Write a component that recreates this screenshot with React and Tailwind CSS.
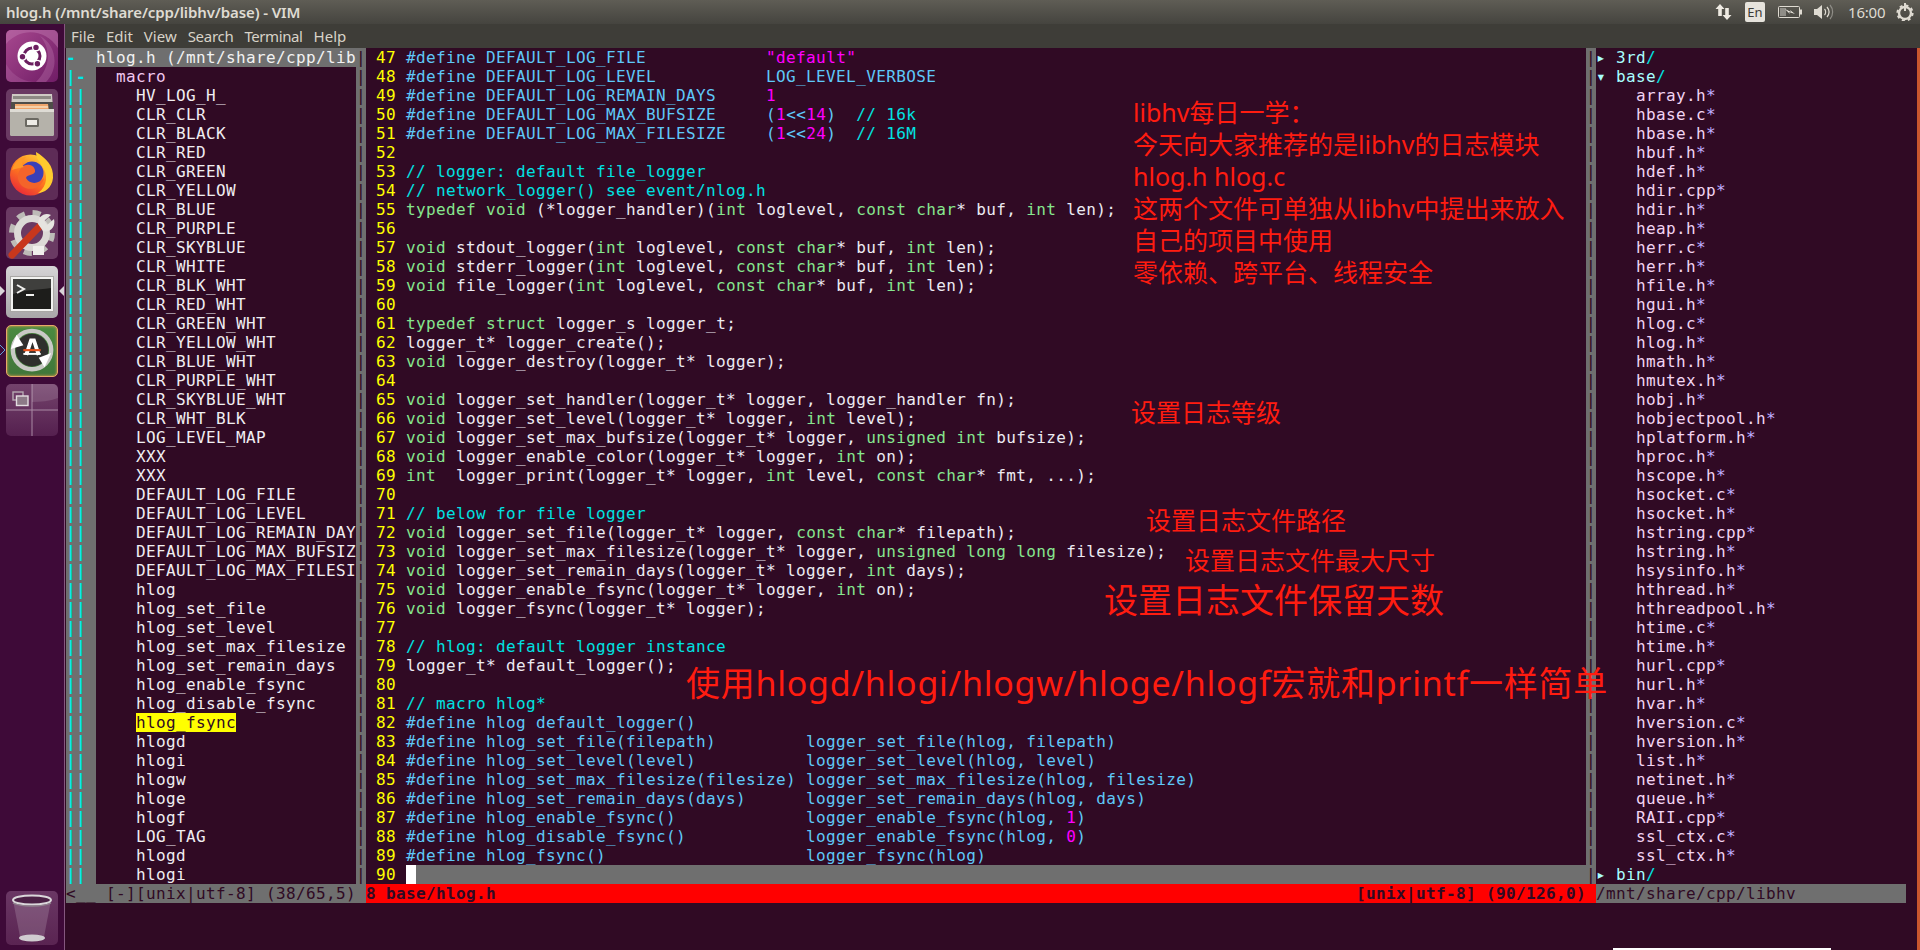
import React from "react";

const CODE = [
  '#define DEFAULT_LOG_FILE            "default"',
  "#define DEFAULT_LOG_LEVEL           LOG_LEVEL_VERBOSE",
  "#define DEFAULT_LOG_REMAIN_DAYS     1",
  "#define DEFAULT_LOG_MAX_BUFSIZE     (1<<14)  // 16k",
  "#define DEFAULT_LOG_MAX_FILESIZE    (1<<24)  // 16M",
  "",
  "// logger: default file_logger",
  "// network_logger() see event/nlog.h",
  "typedef void (*logger_handler)(int loglevel, const char* buf, int len);",
  "",
  "void stdout_logger(int loglevel, const char* buf, int len);",
  "void stderr_logger(int loglevel, const char* buf, int len);",
  "void file_logger(int loglevel, const char* buf, int len);",
  "",
  "typedef struct logger_s logger_t;",
  "logger_t* logger_create();",
  "void logger_destroy(logger_t* logger);",
  "",
  "void logger_set_handler(logger_t* logger, logger_handler fn);",
  "void logger_set_level(logger_t* logger, int level);",
  "void logger_set_max_bufsize(logger_t* logger, unsigned int bufsize);",
  "void logger_enable_color(logger_t* logger, int on);",
  "int  logger_print(logger_t* logger, int level, const char* fmt, ...);",
  "",
  "// below for file logger",
  "void logger_set_file(logger_t* logger, const char* filepath);",
  "void logger_set_max_filesize(logger_t* logger, unsigned long long filesize);",
  "void logger_set_remain_days(logger_t* logger, int days);",
  "void logger_enable_fsync(logger_t* logger, int on);",
  "void logger_fsync(logger_t* logger);",
  "",
  "// hlog: default logger instance",
  "logger_t* default_logger();",
  "",
  "// macro hlog*",
  "#define hlog default_logger()",
  "#define hlog_set_file(filepath)         logger_set_file(hlog, filepath)",
  "#define hlog_set_level(level)           logger_set_level(hlog, level)",
  "#define hlog_set_max_filesize(filesize) logger_set_max_filesize(hlog, filesize)",
  "#define hlog_set_remain_days(days)      logger_set_remain_days(hlog, days)",
  "#define hlog_enable_fsync()             logger_enable_fsync(hlog, 1)",
  "#define hlog_disable_fsync()            logger_enable_fsync(hlog, 0)",
  "#define hlog_fsync()                    logger_fsync(hlog)",
];

const TAGS = ["HV_LOG_H_","CLR_CLR","CLR_BLACK","CLR_RED","CLR_GREEN","CLR_YELLOW","CLR_BLUE","CLR_PURPLE","CLR_SKYBLUE","CLR_WHITE","CLR_BLK_WHT","CLR_RED_WHT","CLR_GREEN_WHT","CLR_YELLOW_WHT","CLR_BLUE_WHT","CLR_PURPLE_WHT","CLR_SKYBLUE_WHT","CLR_WHT_BLK","LOG_LEVEL_MAP","XXX","XXX","DEFAULT_LOG_FILE","DEFAULT_LOG_LEVEL","DEFAULT_LOG_REMAIN_DAY","DEFAULT_LOG_MAX_BUFSIZ","DEFAULT_LOG_MAX_FILESI","hlog","hlog_set_file","hlog_set_level","hlog_set_max_filesize","hlog_set_remain_days","hlog_enable_fsync","hlog_disable_fsync","hlog_fsync","hlogd","hlogi","hlogw","hloge","hlogf","LOG_TAG","hlogd","hlogi"];

const FILES = ["array.h","hbase.c","hbase.h","hbuf.h","hdef.h","hdir.cpp","hdir.h","heap.h","herr.c","herr.h","hfile.h","hgui.h","hlog.c","hlog.h","hmath.h","hmutex.h","hobj.h","hobjectpool.h","hplatform.h","hproc.h","hscope.h","hsocket.c","hsocket.h","hstring.cpp","hstring.h","hsysinfo.h","hthread.h","hthreadpool.h","htime.c","htime.h","hurl.cpp","hurl.h","hvar.h","hversion.c","hversion.h","list.h","netinet.h","queue.h","RAII.cpp","ssl_ctx.c","ssl_ctx.h"];

const RE = /(\/\/.*$|"[^"]*"|\b(?:typedef|void|struct|int|const|char|unsigned|long)\b|\b\d+\b)/;

function Code({ line }) {
  const base = line.startsWith("#define") ? "text-[#5fc8f8]" : "text-[#ecebf2]";
  return line.split(RE).map((t, i) => {
    let c = base;
    if (i % 2) {
      if (t.startsWith("//")) c = "text-[#00e2e2]";
      else if (t.startsWith('"') || /^\d/.test(t)) c = "text-[#ff00ff]";
      else c = "text-[#86e68e]";
    }
    return <span key={i} className={c}>{t}</span>;
  });
}

const Row = ({ className = "", children }) => (
  <div className={"h-[19px] leading-[19px] whitespace-pre flex " + className}>{children}</div>
);

const Sep = () => (
  <div className="w-[10px] shrink-0 bg-[#6f6f6f] flex flex-col">
    {Array.from({ length: 44 }, (_, i) => (
      <div key={i} className="h-[19px] leading-[19px] text-[#300a24]">|</div>
    ))}
  </div>
);

const Tile = ({ children, className = "" }) => (
  <div className={"w-[52px] h-[52px] rounded-[5px] overflow-hidden relative shrink-0 " + className}>{children}</div>
);

function Ubuntu() {
  const dots = [[30, 17.4], [16.5, 26.8], [31.4, 33.8]];
  return (
    <Tile className="bg-gradient-to-br from-[#a8488f] to-[#701c66]">
      <svg viewBox="0 0 52 52" className="w-full h-full">
        <path d="M0 14C16 -4 40 0 52 18V0H0Z" fill="#c07ab2" opacity=".45" />
        <path d="M40 52C54 38 50 14 34 6C46 20 44 38 30 52Z" fill="#c07ab2" opacity=".35" />
        <path d="M0 34C8 48 20 52 30 52H0Z" fill="#c07ab2" opacity=".25" />
        <circle cx="26" cy="26" r="14.5" fill="#fff" />
        <circle cx="26" cy="26" r="8" fill="none" stroke="#6b1f60" strokeWidth="3" />
        {dots.map(([x, y], i) => (
          <g key={i}>
            <circle cx={x} cy={y} r="4" fill="#fff" />
            <circle cx={x} cy={y} r="2.7" fill="#6b1f60" />
          </g>
        ))}
      </svg>
    </Tile>
  );
}

function Files() {
  return (
    <Tile className="bg-[#6a3a63]">
      <svg viewBox="0 0 52 52" className="w-full h-full">
        <path d="M6 5H46L47 20H5Z" fill="#cfcbc4" />
        <rect x="7" y="7" width="38" height="3" fill="#8d8a84" />
        <path d="M5 13H47V20H5Z" fill="#4f4d49" />
        <path d="M9 15H42L43 22H9Z" fill="#f0a56b" />
        <path d="M9 17H42V19H9Z" fill="#f6d0a8" />
        <rect x="4" y="20" width="44" height="27" rx="1.5" fill="#b5b2aa" />
        <rect x="4" y="20" width="44" height="3" fill="#dedbd4" />
        <rect x="19" y="29" width="14" height="9" rx="1.5" fill="#6b6962" />
        <rect x="21" y="31" width="10" height="5" fill="#eeece6" />
      </svg>
    </Tile>
  );
}

function Firefox() {
  return (
    <Tile className="bg-[#5e2c57]">
      <svg viewBox="0 0 52 52" className="w-full h-full">
        <defs>
          <linearGradient id="ff" x1="0.8" y1="0" x2="0.2" y2="1">
            <stop offset="0" stopColor="#ffd23a" />
            <stop offset=".5" stopColor="#ff7a1e" />
            <stop offset="1" stopColor="#e8233a" />
          </linearGradient>
        </defs>
        <circle cx="24.5" cy="27" r="20.5" fill="url(#ff)" />
        <path d="M30 4C40 10 48 18 47 30C46 40 38 45 32 45C42 38 42 26 36 18C33 13 30 10 30 4Z" fill="#ffcb2e" />
        <circle cx="26" cy="25" r="11.5" fill="#3a3fb8" />
        <path d="M16 19C22 14 30 18 29 24C27 28 21 26 20 30C24 37 33 36 38 30C36 40 24 44 16 38C10 32 11 24 16 19Z" fill="#f4642a" />
        <path d="M6 22C8 14 14 10 20 9C16 13 15 17 18 19C13 20 9 21 6 22Z" fill="#ff9a26" />
      </svg>
    </Tile>
  );
}

function Settings() {
  return (
    <Tile className="bg-[#6a3a63]">
      <svg viewBox="0 0 52 52" className="w-full h-full">
        <circle cx="26" cy="26" r="20" fill="none" stroke="#bdbbb7" strokeWidth="6" strokeDasharray="8 7.7" />
        <circle cx="26" cy="26" r="14.5" fill="none" stroke="#dcdad6" strokeWidth="7" />
        <path d="M6 48L34 19" stroke="#c8371c" strokeWidth="7" strokeLinecap="round" />
        <path d="M32 17C32 10 38 5 45 8L38 14L41 18L48 12C50 20 44 26 37 24Z" fill="#e6e4e0" />
        <rect x="27" y="39" width="11" height="9" fill="#f0efec" />
      </svg>
    </Tile>
  );
}

function Terminal() {
  return (
    <Tile className="bg-gradient-to-b from-[#d6d4d6] to-[#a8a6a8]">
      <svg viewBox="0 0 52 52" className="w-full h-full">
        <rect x="4" y="10" width="44" height="36" fill="#a9a7a5" />
        <rect x="5" y="11" width="42" height="34" fill="#f2f2f0" />
        <rect x="7" y="13" width="38" height="30" fill="#1d1d1b" />
        <path d="M7 13H45V22C30 24 18 24 7 28Z" fill="#3f3f3d" />
        <path d="M11 19L18 23L11 27" fill="none" stroke="#f0f0ee" strokeWidth="2" />
        <rect x="20" y="28" width="8" height="2" fill="#f0f0ee" />
      </svg>
    </Tile>
  );
}

function Updater() {
  return (
    <Tile className="bg-gradient-to-b from-[#4a8a40] to-[#40763a] border border-[#e8a868] shadow-[inset_0_0_3px_#f0a050]">
      <svg viewBox="0 0 52 52" className="w-full h-full">
        <circle cx="26" cy="25" r="20" fill="none" stroke="#c9c9c6" strokeWidth="4.5" />
        <circle cx="26" cy="25" r="17" fill="#2f2f2d" />
        <path d="M20 30L25 15H28L33 30" fill="none" stroke="#fff" strokeWidth="4" />
        <rect x="17" y="24" width="18" height="2.2" fill="#e8501a" />
        <rect x="17" y="28" width="18" height="2" fill="#fff" />
        <path d="M4 24L10 9L17 20Z" fill="#fff" />
        <path d="M46 28L39 43L33 33Z" fill="#fff" />
      </svg>
    </Tile>
  );
}

function Workspaces() {
  return (
    <Tile className="bg-gradient-to-b from-[#74436c] to-[#55204f]">
      <svg viewBox="0 0 52 52" className="w-full h-full">
        <path d="M26 0V52M0 26H52" stroke="#a98aa4" strokeWidth="1" />
        <path d="M26 0H52V14C44 17 34 18 26 18Z" fill="#fff" opacity=".12" />
        <rect x="7" y="8" width="10" height="8" fill="none" stroke="#b6a9b2" strokeWidth="1.4" />
        <rect x="10.5" y="12" width="11.5" height="9.5" fill="#8d7a88" stroke="#e4dde2" strokeWidth="1.4" />
      </svg>
    </Tile>
  );
}

function Trash() {
  return (
    <Tile className="bg-gradient-to-b from-[#6a3764] to-[#5a2452] h-[54px]">
      <svg viewBox="0 0 52 54" className="w-full h-full">
        <path d="M7 9L14 46C20 50 32 50 38 46L45 9Z" fill="#fff" opacity=".16" />
        <ellipse cx="26" cy="47" rx="13" ry="3.4" fill="#d0ccd0" />
        <ellipse cx="26" cy="9" rx="19" ry="4.6" fill="#4c2146" stroke="#dad7da" strokeWidth="2" />
        <path d="M7 12C14 16 38 16 45 12" fill="none" stroke="#8f838d" strokeWidth="1.4" />
      </svg>
    </Tile>
  );
}

function Launcher() {
  return (
    <div className="relative w-[65px] shrink-0 bg-[#3e0a38] border-r border-[#85577f] flex flex-col items-start pl-[6px] pt-[6px] pb-[5px] gap-[7px]">
      <Ubuntu />
      <Files />
      <Firefox />
      <Settings />
      <div className="relative">
        <Terminal />
        <svg viewBox="0 0 5 10" className="absolute left-[-6px] top-[20px] w-[5px] h-[10px]"><path d="M0 0L5 5L0 10Z" fill="#d9d4d8" /></svg>
        <svg viewBox="0 0 5 10" className="absolute right-[-6px] top-[20px] w-[5px] h-[10px]"><path d="M5 0L0 5L5 10Z" fill="#d9d4d8" /></svg>
      </div>
      <div className="relative">
        <Updater />
        <svg viewBox="0 0 5 10" className="absolute left-[-6px] top-[20px] w-[5px] h-[10px]"><path d="M0 0L5 5L0 10" fill="none" stroke="#5f9fd8" /></svg>
      </div>
      <Workspaces />
      <div className="mt-auto">
        <Trash />
      </div>
    </div>
  );
}

function Indicators() {
  return (
    <div className="flex items-center h-full text-[#dfdbd2] font-['Noto_Sans',sans-serif] text-[15px]">
      <svg viewBox="0 0 18 18" className="w-[18px] h-[18px] ml-0">
        <path d="M5 1L9.5 6H6.8V13H3.2V6H.5Z" fill="#eeeae2" />
        <path d="M12 17L7.5 12H10.2V5H13.8V12H16.5Z" fill="#eeeae2" />
      </svg>
      <div className="ml-[12px] w-[20px] h-[20px] rounded-[2px] bg-[#e6e3dc] text-[#3c3b37] text-[13px] leading-[20px] text-center">En</div>
      <svg viewBox="0 0 24 12" className="ml-[13px] w-[24px] h-[12px]">
        <rect x=".5" y=".5" width="21" height="11" rx="1" fill="none" stroke="#dfdbd2" />
        <rect x="22" y="3.5" width="2" height="5" fill="#dfdbd2" />
        <rect x="2" y="2" width="6" height="8" fill="#8f8d87" />
        <path d="M7 3L13 6L12 4L17 8L11 6L12 8Z" fill="#eeeae2" />
      </svg>
      <svg viewBox="0 0 20 16" className="ml-[12px] w-[20px] h-[16px]">
        <path d="M0 5H3L8 1V15L3 11H0Z" fill="#dfdbd2" />
        <path d="M10.5 5C12 6.5 12 9.5 10.5 11" fill="none" stroke="#dfdbd2" strokeWidth="1.2" />
        <path d="M13 3C15.5 6 15.5 10 13 13" fill="none" stroke="#dfdbd2" strokeWidth="1.2" />
        <path d="M16 1C19.5 5 19.5 11 16 15" fill="none" stroke="#8f8d87" strokeWidth="1.2" />
      </svg>
      <span className="ml-[14px] w-[36px] tracking-[-0.2px]">16:00</span>
      <svg viewBox="0 0 18 18" className="ml-[12px] mr-[6px] w-[18px] h-[18px]">
        <circle cx="9" cy="10" r="6" fill="none" stroke="#dfdbd2" strokeWidth="2.4" />
        <circle cx="9" cy="10" r="7.6" fill="none" stroke="#dfdbd2" strokeWidth="2" strokeDasharray="3 3" />
        <path d="M9 0V8" stroke="#dfdbd2" strokeWidth="2" />
      </svg>
    </div>
  );
}

const FOLD = "w-[30px] font-bold text-[#00e8e8]";

function Vim() {
  return (
    <div className="w-[1840px] shrink-0 ml-[1px] font-['DejaVu_Sans_Mono',monospace] text-[16px] tracking-[0.37px]">
      <div className="flex">
        <div className="w-[290px] shrink-0">
          <Row className="bg-[#6f6f6f]">
            <span className={FOLD}>-</span>
            <span className="text-[#f2f2f2]">hlog.h (/mnt/share/cpp/lib</span>
          </Row>
          <Row>
            <span className={FOLD + " bg-[#6f6f6f]"}>|-</span>
            <span className="pl-[20px] text-[#f0c8f0]">macro</span>
          </Row>
          {TAGS.map((t, i) => (
            <Row key={i}>
              <span className={FOLD + " bg-[#6f6f6f]"}>||</span>
              <span className="pl-[40px] text-[#f0eef2]">
                <span className={t === "hlog_fsync" ? "bg-[#ffff00] text-[#300a24]" : ""}>{t}</span>
              </span>
            </Row>
          ))}
        </div>
        <Sep />
        <div className="w-[1220px] shrink-0">
          {CODE.map((l, i) => (
            <Row key={i}>
              <span className="w-[40px] shrink-0 pl-[10px] text-[#ffff00]">{47 + i}</span>
              <span><Code line={l} /></span>
            </Row>
          ))}
          <Row>
            <span className="w-[40px] shrink-0 pl-[10px] text-[#ffff00]">90</span>
            <span className="w-[10px] bg-white" />
            <span className="flex-1 bg-[#6f6f6f]" />
          </Row>
        </div>
        <Sep />
        <div className="w-[310px] shrink-0">
          <Row>
            <span className="w-[20px] text-[#a8ffff]">▸</span>
            <span className="text-[#a8ffff]">3rd<span className="text-[#00e2e2]">/</span></span>
          </Row>
          <Row>
            <span className="w-[20px] text-[#a8ffff]">▾</span>
            <span className="text-[#a8ffff]">base<span className="text-[#00e2e2]">/</span></span>
          </Row>
          {FILES.map((f, i) => (
            <Row key={i}>
              <span className="pl-[40px] text-[#f2d4f2]">{f}<span className="text-[#c0b0ff]">*</span></span>
            </Row>
          ))}
          <Row>
            <span className="w-[20px] text-[#a8ffff]">▸</span>
            <span className="text-[#a8ffff]">bin<span className="text-[#00e2e2]">/</span></span>
          </Row>
        </div>
      </div>
      <div className="flex h-[19px] leading-[19px] whitespace-pre text-[#300a24]">
        <div className="w-[300px] shrink-0 bg-[#6f6f6f]">{"<__ [-][unix|utf-8] (38/65,5)"}</div>
        <div className="w-[1230px] shrink-0 bg-[#ff0000] font-bold flex justify-between pr-[10px]">
          <span>8 base/hlog.h</span>
          <span>[unix|utf-8] (90/126,0)</span>
        </div>
        <div className="w-[310px] shrink-0 bg-[#6f6f6f]">/mnt/share/cpp/libhv</div>
      </div>
    </div>
  );
}

const NOTES = "absolute whitespace-pre text-[#ff1c10] font-['Noto_Sans','Noto_Sans_CJK_SC',sans-serif]";

export default function App() {
  return (
    <div className="relative w-[1920px] h-[950px] overflow-hidden flex flex-col bg-[#300a24]">
      <div className="h-[24px] shrink-0 flex items-center justify-between pl-[6px] bg-gradient-to-b from-[#5f5d55] to-[#45443f]">
        <span className="text-[#dfdbd2] font-['Noto_Sans',sans-serif] font-semibold text-[15px] tracking-[-0.1px]">hlog.h (/mnt/share/cpp/libhv/base) - VIM</span>
        <Indicators />
      </div>
      <div className="flex-1 flex min-h-0">
        <Launcher />
        <div className="flex-1 flex flex-col min-w-0">
          <div className="h-[24px] shrink-0 bg-[#3e3d38] flex items-center pl-[6px] gap-[11px] text-[15px] text-[#d8d3c8] font-['Noto_Sans',sans-serif]">
            <span>File</span><span>Edit</span><span>View</span><span className="tracking-[-0.3px]">Search</span><span className="tracking-[-0.4px]">Terminal</span><span>Help</span>
          </div>
          <div className="flex-1 flex">
            <Vim />
            <div className="flex-1" />
            <div className="w-[3px] bg-[#c9572e]" />
          </div>
        </div>
      </div>

      <div className={NOTES + " left-[1133px] top-[96px] text-[25px] leading-[32px]"}>
        {"libhv每日一学：\n今天向大家推荐的是libhv的日志模块\nhlog.h hlog.c\n这两个文件可单独从libhv中提出来放入\n自己的项目中使用\n零依赖、跨平台、线程安全"}
      </div>
      <div className={NOTES + " left-[1131px] top-[396px] text-[25px] leading-[32px]"}>设置日志等级</div>
      <div className={NOTES + " left-[1146px] top-[504px] text-[25px] leading-[32px]"}>设置日志文件路径</div>
      <div className={NOTES + " left-[1185px] top-[544px] text-[25px] leading-[32px]"}>设置日志文件最大尺寸</div>
      <div className={NOTES + " left-[1104px] top-[580px] text-[34px] leading-[40px]"}>设置日志文件保留天数</div>
      <div className={NOTES + " left-[686px] top-[663px] text-[34px] leading-[40px] tracking-[0.75px]"}>使用hlogd/hlogi/hlogw/hloge/hlogf宏就和printf一样简单</div>
      <div className="absolute left-[1613px] top-[948px] w-[218px] h-[2px] bg-white" />
    </div>
  );
}
